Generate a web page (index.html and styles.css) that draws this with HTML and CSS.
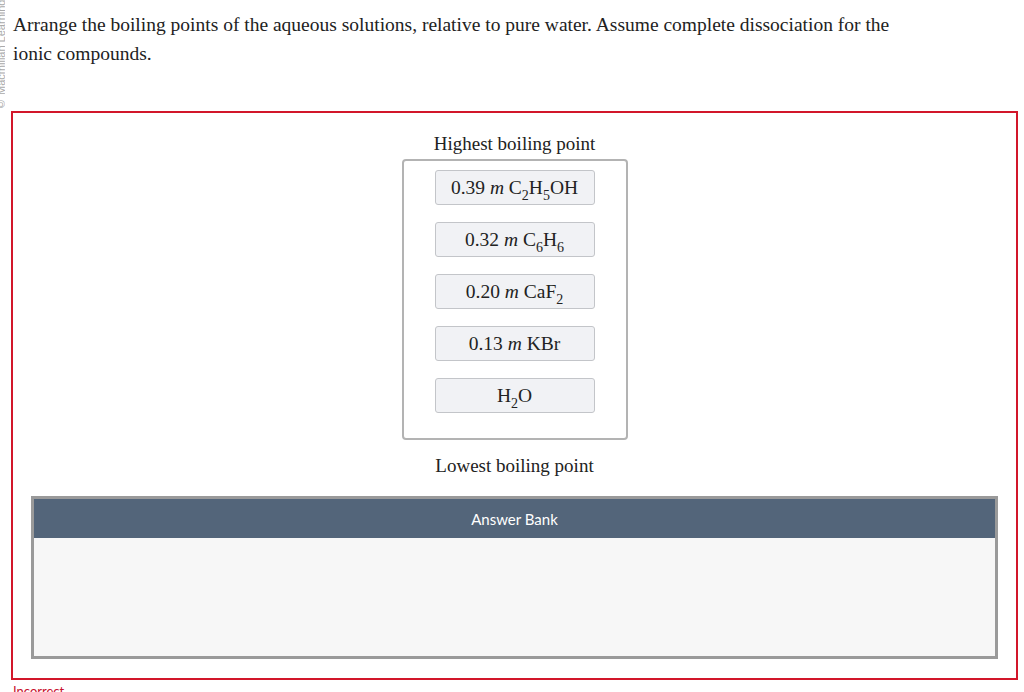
FILE: index.html
```html
<!DOCTYPE html>
<html lang="en">
<head>
    <meta charset="UTF-8">
    <title>Boiling Points</title>
    <link rel="stylesheet" href="styles.css">
</head>
<body>
    <div class="copyright">© Macmillan Learning</div>

    <p class="question">Arrange the boiling points of the aqueous solutions, relative to pure water. Assume complete dissociation for the ionic compounds.</p>

    <div class="panel">
        <div class="label">Highest boiling point</div>
        <div class="zone">
            <div class="item">0.39 <i>m</i> C<sub>2</sub>H<sub>5</sub>OH</div>
            <div class="item">0.32 <i>m</i> C<sub>6</sub>H<sub>6</sub></div>
            <div class="item">0.20 <i>m</i> CaF<sub>2</sub></div>
            <div class="item">0.13 <i>m</i> KBr</div>
            <div class="item">H<sub>2</sub>O</div>
        </div>
        <div class="label">Lowest boiling point</div>

        <div class="bank">
            <div class="bank-head">Answer Bank</div>
            <div class="bank-body"></div>
        </div>
    </div>

    <div class="result">Incorrect</div>
</body>
</html>
```

FILE: styles.css
```css
body {
    margin: 0;
    background: #fff;
    font-family: "Liberation Serif", "Times New Roman", serif;
    color: #222;
    position: relative;
}
.copyright {
    position: absolute;
    left: -5px;
    top: 0;
    width: 10px;
    height: 185px;
    writing-mode: vertical-rl;
    transform: rotate(180deg);
    font-family: "Liberation Sans", Arial, sans-serif;
    font-size: 11px;
    color: #aaa;
    overflow: hidden;
    text-align: right;
}
.question {
    margin: 0;
    padding: 10px 0 0 13px;
    width: 900px;
    font-size: 19.5px;
    line-height: 29px;
}
.panel {
    margin: 43px 6px 0 11px;
    border: 2px solid #d2172a;
    padding: 19px 18px 19px;
}
.label {
    text-align: center;
    font-size: 19px;
    line-height: 24px;
}
.zone {
    width: 222px;
    margin: 3px auto 14px;
    border: 2px solid #b3b3b3;
    border-radius: 4px;
    padding: 9px 0 25px;
    display: flex;
    flex-direction: column;
    align-items: center;
    gap: 17px;
}
.item {
    box-sizing: border-box;
    width: 160px;
    height: 35px;
    padding-top: 5px;
    background: #f1f2f5;
    border: 1px solid #c3c5c9;
    border-radius: 3px;
    text-align: center;
    font-size: 19.5px;
    line-height: 24px;
}
.item sub {
    font-size: 14px;
    vertical-align: -6px;
    line-height: 0;
}
.bank {
    margin-top: 18px;
    border: 3px solid #9a9a9a;
}
.bank-head {
    height: 39px;
    background: #53657a;
    color: #fff;
    font-family: Lato, "Liberation Sans", sans-serif;
    font-size: 15px;
    text-align: center;
    line-height: 41px;
}
.bank-body {
    height: 118px;
    background: #f7f7f7;
}
.result {
    margin: 3px 0 0 13px;
    font-family: Lato, "Liberation Sans", sans-serif;
    font-size: 13px;
    color: #c8102e;
}
```
